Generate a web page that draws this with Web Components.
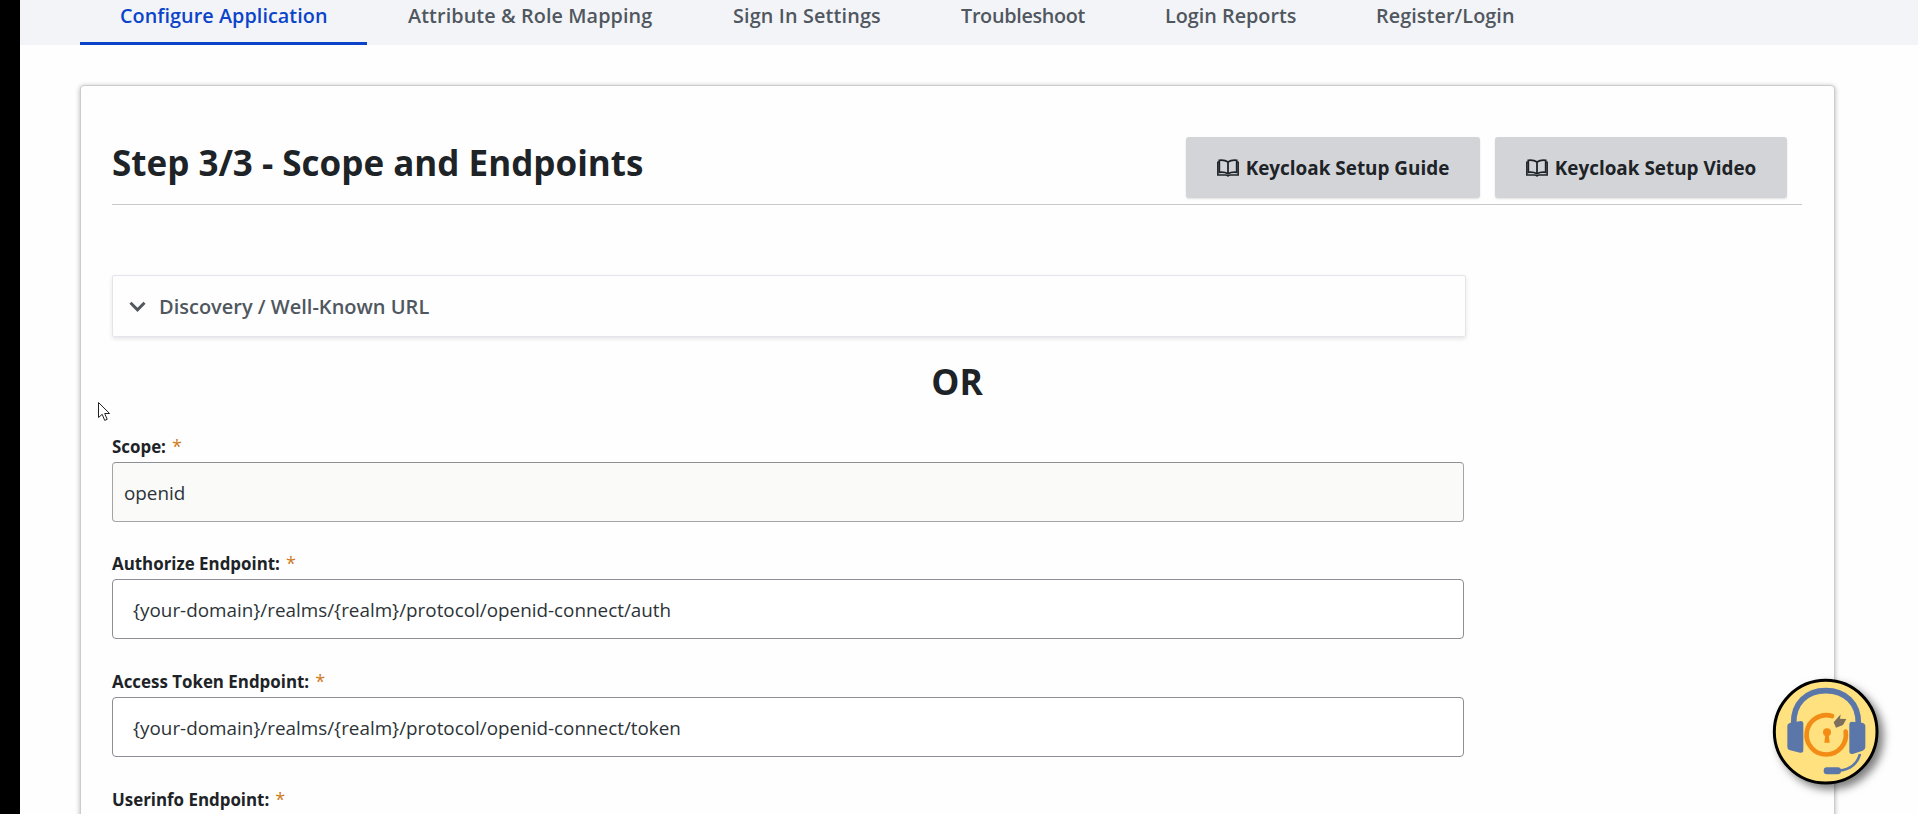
<!DOCTYPE html>
<html>
<head>
<meta charset="utf-8">
<title>Configure Application</title>
<style>
	html, body { margin: 0; height: 100%; overflow: hidden; background: #fff; }
	body { font-family: "Open Sans", "Liberation Sans", sans-serif; color: #1d2327; }
</style>
</head>
<body>

<x-app>
	<x-tab-bar>
		<x-tab active style="--w: 287px; letter-spacing: .05px">Configure Application</x-tab>
		<x-tab style="--w: 325px; margin-left: 1px; letter-spacing: .1px">Attribute &amp; Role Mapping</x-tab>
		<x-tab style="--w: 228px; letter-spacing: .15px">Sign In Settings</x-tab>
		<x-tab style="--w: 204px; letter-spacing: -.3px">Troubleshoot</x-tab>
		<x-tab style="--w: 211px">Login Reports</x-tab>
		<x-tab style="--w: 218px; letter-spacing: .08px">Register/Login</x-tab>
	</x-tab-bar>
	<x-card>
		<x-step-head>
			<span slot="title">Step 3/3 - Scope and Endpoints</span>
			<x-guide-btn style="--w: 294px">Keycloak Setup Guide</x-guide-btn>
			<x-guide-btn style="--w: 292px">Keycloak Setup Video</x-guide-btn>
		</x-step-head>
		<x-accordion>Discovery / Well-Known URL</x-accordion>
		<x-or>OR</x-or>
		<x-field label="Scope:" filled style="margin-bottom: 31px">openid</x-field>
		<x-field label="Authorize Endpoint:" style="margin-bottom: 32px">{your-domain}/realms/{realm}/protocol/openid-connect/auth</x-field>
		<x-field label="Access Token Endpoint:">{your-domain}/realms/{realm}/protocol/openid-connect/token</x-field>
		<x-field label="Userinfo Endpoint:"></x-field>
	</x-card>
</x-app>
<x-pointer></x-pointer>
<x-support-badge></x-support-badge>

<script>
	(function() {
		// small helper so every element gets an open shadow root from a string
		function define(name, html, setup) {
			const tpl = document.createElement('template');
			tpl.innerHTML = html;
			customElements.define(name, class extends HTMLElement {
				constructor() {
					super();
					this.attachShadow({mode: 'open'}).appendChild(tpl.content.cloneNode(true));
					if(setup) setup(this);
				}
			});
		}

		define('x-app', `
			<style>
				:host { display: block; height: 100vh; overflow: hidden; border-left: 20px solid #000; box-sizing: border-box; background: #fefefe; }
			</style>
			<slot></slot>`);

		define('x-tab-bar', `
			<style>
				:host { display: flex; height: 45px; padding-left: 60px; background: #f3f4f8; }
			</style>
			<slot></slot>`);

		define('x-tab', `
			<style>
				:host { display: block; box-sizing: border-box; width: var(--w); height: 45px; padding-left: 40px; line-height: 32px; font-size: 19.8px; font-weight: 600; color: #50575e; white-space: nowrap; border-bottom: 3px solid transparent; }
				:host([active]) { color: #0b44c9; border-bottom-color: #0b44c9; }
			</style>
			<slot></slot>`);

		define('x-card', `
			<style>
				:host { display: block; box-sizing: border-box; width: 1755px; margin: 40px 0 0 60px; padding: 0 32px 40px 31px; background: #fefefe; border: 1px solid #ccc; border-radius: 4px; box-shadow: 0 1px 5px rgba(0,0,0,.3); }
			</style>
			<slot></slot>`);

		define('x-step-head', `
			<style>
				:host { display: flex; justify-content: space-between; padding: 51px 15px 6px 0; border-bottom: 1px solid #c8c9cc; margin-bottom: 70px; }
				h2 { margin: 0; font-size: 35px; line-height: 52px; font-weight: 700; color: #1d2327; }
				div { display: flex; gap: 15px; }
			</style>
			<h2><slot name="title"></slot></h2>
			<div><slot></slot></div>`);

		define('x-guide-btn', `
			<style>
				:host { display: flex; align-items: center; justify-content: center; gap: 7px; box-sizing: border-box; width: var(--w); height: 61px; background: #d3d4d8; border-radius: 3px; box-shadow: 0 1px 2px rgba(0,0,0,.12); font-size: 18.9px; font-weight: 700; color: #1d2327; white-space: nowrap; }
				svg { width: 22px; height: 18px; flex: none; }
			</style>
			<svg viewBox="0 0 21 17" fill="none" stroke="#1d2327" stroke-width="1.7">
				<path d="M10.5 2.8C8.2 1.2 5 .9 2.2 1.2V12.6C5 12.3 8.2 12.6 10.5 14C12.8 12.6 16 12.3 18.8 12.6V1.2C16 .9 12.8 1.2 10.5 2.8V14"/>
				<path d="M2.2 3H.8V15.2H8.6C9.4 15.2 9.8 16 10.5 16C11.2 16 11.6 15.2 12.4 15.2H20.2V3H18.8" stroke-width="1.5"/>
			</svg>
			<slot></slot>`);

		define('x-accordion', `
			<style>
				:host { display: flex; align-items: center; gap: 13px; box-sizing: border-box; width: 1354px; height: 62px; padding-left: 16px; border: 1px solid #e4e5ea; border-radius: 2px; box-shadow: 0 2px 4px rgba(0,0,0,.1); font-size: 20px; font-weight: 600; color: #50575e; }
				svg { width: 17px; height: 11px; flex: none; }
			</style>
			<svg viewBox="0 0 17 11" fill="none" stroke="#50575e" stroke-width="3"><path d="M1.5 1.8L8.5 8.8L15.5 1.8"/></svg>
			<slot></slot>`);

		define('x-or', `
			<style>
				:host { display: block; margin: 20px 0 31px; text-align: center; font-size: 35.4px; line-height: 48px; font-weight: 700; color: #1d2327; }
			</style>
			<slot></slot>`);

		define('x-field', `
			<style>
				:host { display: block; width: 1352px; margin-bottom: 31.5px; }
				label { display: block; height: 24px; margin-bottom: 2px; line-height: 21px; font-size: 16.9px; font-weight: 700; color: #1d2327; white-space: nowrap; }
				i { font-style: normal; font-weight: 400; font-size: 18px; line-height: 18px; color: #d07a1c; margin-left: 6px; }
				div { box-sizing: border-box; height: 60px; padding: 0 20px; line-height: 60px; font-size: 18.85px; color: #2c3338; background: #fff; border: 1px solid #8c8f94; border-radius: 4px; white-space: nowrap; }
				:host([filled]) div { padding: 0 11px; background: #fafaf8; border-color: #a2a4a8; border-top-color: #8c8f94; }
			</style>
			<label><span id="t"></span><i>*</i></label>
			<div><slot></slot></div>`, function(el) {
				el.shadowRoot.getElementById('t').textContent = el.getAttribute('label');
			});

		// mouse pointer caught in the screenshot
		define('x-pointer', `
			<style>
				:host { position: fixed; left: 98px; top: 402px; width: 13px; height: 20px; }
				svg { display: block; }
			</style>
			<svg width="13" height="20" viewBox="0 0 13 20"><path d="M.5.5V15.5L4.2 12.3L6.7 18.4L9.2 17.3L6.7 11.5H11.6Z" fill="#fff" stroke="#222" stroke-width="1"/></svg>`);

		// round support button, drawn in the coordinates of the 3x crop
		define('x-support-badge', `
			<style>
				:host { position: fixed; left: 1750px; top: 660px; width: 168px; height: 154px; }
				svg { display: block; filter: drop-shadow(5px 5px 4px rgba(0,0,0,.5)); }
			</style>
			<svg width="168" height="154" viewBox="0 0 504 462">
				<circle cx="227" cy="215" r="154" fill="#ffe27f" stroke="#000" stroke-width="9"/>
				<path d="M131 192C129 130 170 92 227 92C285 92 327 130 325 192" fill="none" stroke="#5b76a8" stroke-width="17"/>
				<path d="M122 188L152 183Q160 183 160 192V270Q160 280 150 278L118 270Q112 268 112 260V198Q112 190 122 188Z" fill="#5b76a8"/>
				<path d="M336 188L306 185Q298 185 298 194V274Q298 284 308 282L338 272Q346 270 346 262V198Q346 190 336 188Z" fill="#5b76a8"/>
				<path d="M330 282C322 312 300 328 268 332" fill="none" stroke="#5b76a8" stroke-width="8"/>
				<rect x="221" y="322" width="52" height="21" rx="10" fill="#5b76a8"/>
				<path d="M246 168A59 59 0 1 0 287 215" fill="none" stroke="#f28c16" stroke-width="14" stroke-linecap="round"/>
				<circle cx="231" cy="217" r="12" fill="#f28c16"/>
				<path d="M226 222H236L239 248H223Z" fill="#f28c16"/>
				<path d="M251 187L272 163L270 176L289 177L279 195L258 203Z" fill="#7d6f5d"/>
			</svg>`);
	})();
</script>
</body>
</html>
